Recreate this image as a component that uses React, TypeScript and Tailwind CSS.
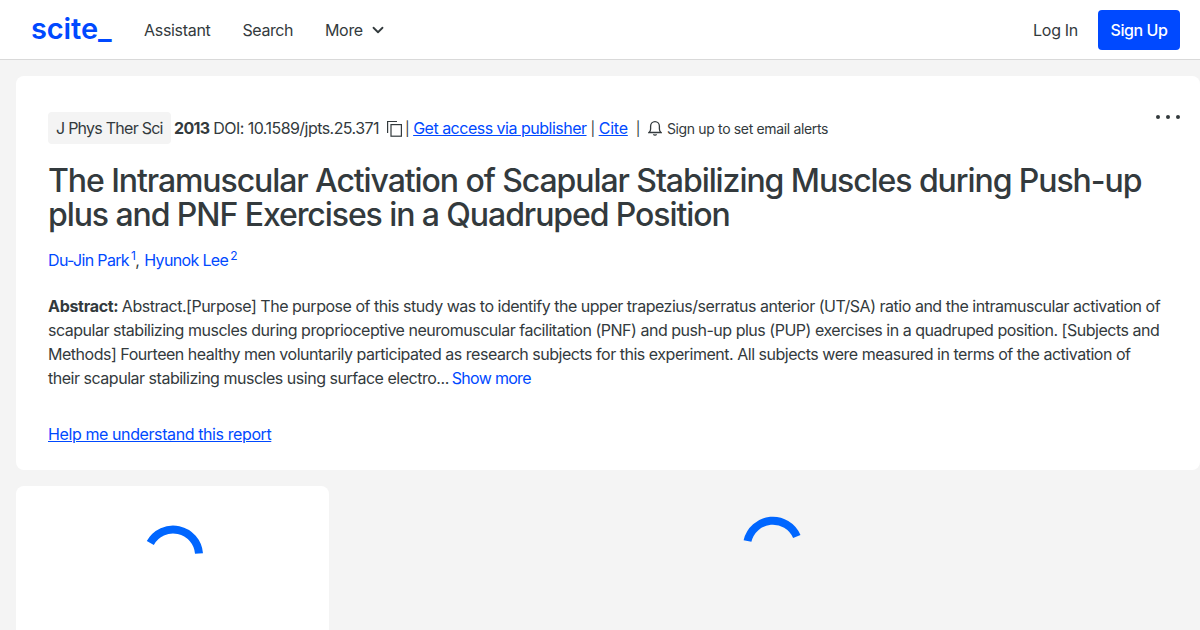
import { ChevronDown } from "lucide-react";

function Spinner({ d }: { d: string }) {
  return (
    <svg width="60" height="60" viewBox="0 0 60 60" fill="none" className="block overflow-visible">
      <path d={d} stroke="#0066ff" strokeWidth="8" />
    </svg>
  );
}

function CopyIcon() {
  return (
    <svg width="17" height="17" viewBox="0 0 17 17" fill="none" stroke="#333a3d" strokeWidth="1.2" className="inline-block">
      <path d="M11 1.5H1.6V13" />
      <rect x="5" y="4.6" width="10.4" height="11.6" />
    </svg>
  );
}

function BellIcon() {
  return (
    <svg width="14" height="16" viewBox="0 0 14 16" fill="none" stroke="#333a3d" strokeWidth="1.3" className="inline-block">
      <path d="M1 12.5c1.2-1 1.6-2 1.6-3.5V6.2C2.6 3.6 4.5 1.6 7 1.6s4.4 2 4.4 4.6V9c0 1.500.4 2.500 1.600 3.500z" />
      <path d="M5.500 14.200c.3.700.9 1 1.500 1s1.200-.3 1.500-1" />
    </svg>
  );
}

export default function App() {
  return (
    <div className="h-[630px] overflow-hidden bg-[#f4f4f4] font-['Inter',sans-serif] text-[#333a3d]">
      <header className="h-[60px] bg-white border-b border-[#d9d9d9] flex items-center pl-8 pr-5">
        <a className="text-[29px] font-semibold text-[#0049ff] leading-none tracking-[-0.1px] -mt-0.5 -ml-px w-[81px]">scite_</a>
        <nav className="flex items-center gap-8 ml-8 text-[16px] tracking-[-0.3px]">
          <span>Assistant</span>
          <span className="tracking-[-0.45px]">Search</span>
          <span className="flex items-center gap-[6px]">
            More
            <ChevronDown size={18} strokeWidth={2.4} />
          </span>
        </nav>
        <div className="ml-auto flex items-center gap-5 text-[16px] tracking-[-0.3px]">
          <span>Log In</span>
          <span className="h-10 w-[82px] rounded bg-[#0049ff] text-white font-medium flex items-center justify-center tracking-[-0.45px]">Sign Up</span>
        </div>
      </header>

      <main className="pl-4 pt-4 flex flex-col gap-4">
        <section className="relative h-[394px] bg-white rounded-lg pl-8 pr-8 pt-9">
          <div className="flex items-center text-[16px] tracking-[-0.55px] whitespace-nowrap h-8">
            <span className="h-8 w-[123px] px-2 rounded bg-[#f4f4f4] flex items-center tracking-[-0.75px]">J Phys Ther Sci</span>
            <b className="ml-[3px] font-bold tracking-[-0.7px]">2013</b>
            <span className="ml-1">DOI: 10.1589/jpts.25.371</span>
            <span className="ml-[7px] flex"><CopyIcon /></span>
            <span className="ml-0.5 text-[14px]">|</span>
            <a className="ml-1 text-[#0049ff] underline tracking-[-0.5px]">Get access via publisher</a>
            <span className="ml-1 text-[14px]">|</span>
            <a className="ml-1 text-[#0049ff] underline tracking-[-0.2px]">Cite</a>
            <span className="ml-2 text-[14px]">|</span>
            <span className="ml-2 flex"><BellIcon /></span>
            <span className="ml-[5px] text-[14px] tracking-[-0.35px]">Sign up to set email alerts</span>
          </div>
          <button className="absolute right-[20px] top-[39px] flex gap-[6px]">
            <span className="w-1 h-1 rounded-full bg-[#333a3d]" />
            <span className="w-1 h-1 rounded-full bg-[#333a3d]" />
            <span className="w-1 h-1 rounded-full bg-[#333a3d]" />
          </button>
          <h1 className="mt-5 text-[32px] leading-[34px] font-medium tracking-[-1.08px] whitespace-nowrap">
            The Intramuscular Activation of Scapular Stabilizing Muscles during Push-up
            <br />
            plus and PNF Exercises in a Quadruped Position
          </h1>
          <p className="mt-4 text-[16px] leading-6 tracking-[-0.66px] text-[#0049ff]">
            Du-Jin Park<sup className="text-[12px] ml-0.5">1</sup>
            <span className="text-[#333a3d] tracking-normal">, </span>Hyunok Lee<sup className="text-[12px] ml-0.5">2</sup>
          </p>
          <p className="mt-[22px] text-[16px] leading-6 tracking-[-0.48px] whitespace-nowrap">
            <b className="font-bold tracking-[-0.3px]">Abstract: </b>
            Abstract.[Purpose] The purpose of this study was to identify the upper trapezius/serratus anterior (UT/SA) ratio and the intramuscular activation of
            <br />
            scapular stabilizing muscles during proprioceptive neuromuscular facilitation (PNF) and push-up plus (PUP) exercises in a quadruped position. [Subjects and
            <br />
            Methods] Fourteen healthy men voluntarily participated as research subjects for this experiment. All subjects were measured in terms of the activation of
            <br />
            their scapular stabilizing muscles using surface electro... <a className="text-[#0049ff] tracking-[-0.7px] -ml-px">Show more</a>
          </p>
          <a className="block mt-8 text-[16px] leading-6 tracking-[-0.4px] text-[#0049ff] underline">Help me understand this report</a>
        </section>

        <div className="flex gap-4">
          <section className="w-[313px] h-[200px] shrink-0 bg-white rounded-lg pt-10 flex justify-center">
            <Spinner d="M7.300 17A26 26 0 0 1 56 27.500" />
          </section>
          <div className="flex-1 pt-[31px] flex justify-center">
            <Spinner d="M4.500 24A26 26 0 0 1 53.800 19.500" />
          </div>
        </div>
      </main>
    </div>
  );
}
